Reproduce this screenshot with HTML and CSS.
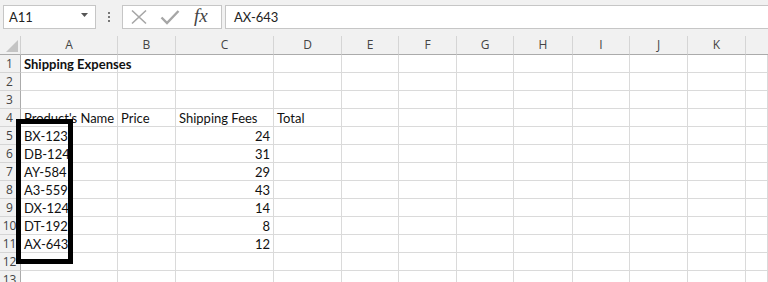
FILE: index.html
```html
<!DOCTYPE html>
<html>
<head>
<meta charset="utf-8">
<link rel="stylesheet" href="styles.css">
</head>
<body>
<div class="app">
  <div class="topbar">
    <div class="namebox">
      <span class="name">A11</span>
      <svg class="caret" width="7" height="4" viewBox="0 0 7 4"><path d="M0 0h7L3.5 4z" fill="#555"/></svg>
    </div>
    <div class="dots"><i></i><i></i><i></i></div>
    <div class="fbuttons">
      <svg class="ico" width="18" height="16" viewBox="0 0 18 16"><path d="M2 1.5L16 14.5M16 1.5L2 14.5" stroke="#a6a6a6" stroke-width="1.6" fill="none"/></svg>
      <svg class="ico" width="20" height="16" viewBox="0 0 20 16"><path d="M1.5 8.5L7 14L18.5 2" stroke="#a6a6a6" stroke-width="2.4" fill="none"/></svg>
      <span class="fx">fx</span>
    </div>
    <div class="formula">AX-643</div>
  </div>
  <div class="sheet">
    <div class="corner"><svg width="12" height="12" viewBox="0 0 12 12"><path d="M12 0V12H0z" fill="#c4c4c4"/></svg></div>
    <div class="ch">A</div><div class="ch">B</div><div class="ch">C</div><div class="ch">D</div><div class="ch">E</div><div class="ch">F</div><div class="ch">G</div><div class="ch">H</div><div class="ch">I</div><div class="ch">J</div><div class="ch">K</div><div class="ch last"></div>

    <div class="rh">1</div><div class="c bold ovf">Shipping Expenses</div><div class="c"></div><div class="c"></div><div class="c"></div><div class="c"></div><div class="c"></div><div class="c"></div><div class="c"></div><div class="c"></div><div class="c"></div><div class="c"></div><div class="c"></div>
    <div class="rh">2</div><div class="c"></div><div class="c"></div><div class="c"></div><div class="c"></div><div class="c"></div><div class="c"></div><div class="c"></div><div class="c"></div><div class="c"></div><div class="c"></div><div class="c"></div><div class="c"></div>
    <div class="rh">3</div><div class="c"></div><div class="c"></div><div class="c"></div><div class="c"></div><div class="c"></div><div class="c"></div><div class="c"></div><div class="c"></div><div class="c"></div><div class="c"></div><div class="c"></div><div class="c"></div>
    <div class="rh">4</div><div class="c">Product's Name</div><div class="c">Price</div><div class="c">Shipping Fees</div><div class="c">Total</div><div class="c"></div><div class="c"></div><div class="c"></div><div class="c"></div><div class="c"></div><div class="c"></div><div class="c"></div><div class="c"></div>
    <div class="rh">5</div><div class="c">BX-123</div><div class="c"></div><div class="c num">24</div><div class="c"></div><div class="c"></div><div class="c"></div><div class="c"></div><div class="c"></div><div class="c"></div><div class="c"></div><div class="c"></div><div class="c"></div>
    <div class="rh">6</div><div class="c">DB-124</div><div class="c"></div><div class="c num">31</div><div class="c"></div><div class="c"></div><div class="c"></div><div class="c"></div><div class="c"></div><div class="c"></div><div class="c"></div><div class="c"></div><div class="c"></div>
    <div class="rh">7</div><div class="c">AY-584</div><div class="c"></div><div class="c num">29</div><div class="c"></div><div class="c"></div><div class="c"></div><div class="c"></div><div class="c"></div><div class="c"></div><div class="c"></div><div class="c"></div><div class="c"></div>
    <div class="rh">8</div><div class="c">A3-559</div><div class="c"></div><div class="c num">43</div><div class="c"></div><div class="c"></div><div class="c"></div><div class="c"></div><div class="c"></div><div class="c"></div><div class="c"></div><div class="c"></div><div class="c"></div>
    <div class="rh">9</div><div class="c">DX-124</div><div class="c"></div><div class="c num">14</div><div class="c"></div><div class="c"></div><div class="c"></div><div class="c"></div><div class="c"></div><div class="c"></div><div class="c"></div><div class="c"></div><div class="c"></div>
    <div class="rh">10</div><div class="c">DT-192</div><div class="c"></div><div class="c num">8</div><div class="c"></div><div class="c"></div><div class="c"></div><div class="c"></div><div class="c"></div><div class="c"></div><div class="c"></div><div class="c"></div><div class="c"></div>
    <div class="rh">11</div><div class="c">AX-643</div><div class="c"></div><div class="c num">12</div><div class="c"></div><div class="c"></div><div class="c"></div><div class="c"></div><div class="c"></div><div class="c"></div><div class="c"></div><div class="c"></div><div class="c"></div>
    <div class="rh">12</div><div class="c"></div><div class="c"></div><div class="c"></div><div class="c"></div><div class="c"></div><div class="c"></div><div class="c"></div><div class="c"></div><div class="c"></div><div class="c"></div><div class="c"></div><div class="c"></div>
    <div class="rh">13</div><div class="c"></div><div class="c"></div><div class="c"></div><div class="c"></div><div class="c"></div><div class="c"></div><div class="c"></div><div class="c"></div><div class="c"></div><div class="c"></div><div class="c"></div><div class="c"></div>
  </div>
  <div class="highlight"></div>
</div>
</body>
</html>
```

FILE: styles.css
```css
html, body {
  margin: 0;
  padding: 0;
  background: #ffffff;
  overflow: hidden;
}
.app {
  position: relative;
  width: 768px;
  height: 282px;
  overflow: hidden;
  font-family: Lato, "Liberation Sans", sans-serif;
}
.topbar {
  height: 36px;
  background: #f1f1f1;
  display: flex;
  align-items: flex-start;
  padding-top: 5px;
  box-sizing: border-box;
}
.namebox {
  margin-left: 3px;
  width: 93px;
  height: 24px;
  box-sizing: border-box;
  background: #fff;
  border: 1px solid #c6c6c6;
  display: flex;
  align-items: center;
  justify-content: space-between;
  padding: 0 7px 0 5px;
  font-size: 13px;
  color: #222;
}
.caret { margin-top: -4px; }
.dots {
  width: 26px;
  height: 24px;
  display: flex;
  flex-direction: column;
  align-items: center;
  justify-content: center;
  gap: 2px;
}
.dots i {
  display: block;
  width: 2px;
  height: 2px;
  background: #777;
}
.fbuttons {
  width: 100px;
  height: 24px;
  box-sizing: border-box;
  background: #fff;
  border: 1px solid #c6c6c6;
  display: flex;
  align-items: center;
  padding-left: 7px;
  gap: 12px;
}
.fx {
  font-family: "Liberation Serif", serif;
  font-style: italic;
  font-size: 19px;
  color: #444;
  margin-left: 2px;
  margin-top: -2px;
}
.formula {
  margin-left: 3px;
  flex: 1;
  height: 24px;
  box-sizing: border-box;
  background: #fff;
  border: 1px solid #c6c6c6;
  border-right: none;
  padding-left: 8px;
  font-size: 13px;
  line-height: 22px;
  color: #222;
}
.sheet {
  display: grid;
  grid-template-columns: 21px 97px 58px 98px 68px 57px 58px 57px 59px 57px 58px 58px 1fr;
  grid-template-rows: 19px repeat(13, 18px);
}
.corner {
  background: #f1f1f1;
  border-right: 1px solid #d0d0d0;
  border-bottom: 1px solid #ababab;
  box-sizing: border-box;
  display: flex;
  align-items: flex-end;
  justify-content: flex-end;
  padding: 0 2px 2px 0;
}
.ch {
  background: #f1f1f1;
  border-right: 1px solid #d5d5d5;
  border-bottom: 1px solid #ababab;
  box-sizing: border-box;
  text-align: center;
  font-family: "Open Sans", sans-serif;
  font-size: 12px;
  line-height: 18px;
  color: #444;
}
.ch.last { border-right: none; }
.rh {
  background: #f1f1f1;
  border-right: 1px solid #ababab;
  border-bottom: 1px solid #d5d5d5;
  box-sizing: border-box;
  text-align: center;
  font-family: "Open Sans", sans-serif;
  font-size: 12px;
  line-height: 18px;
  color: #444;
  padding-right: 1px;
}
.c {
  border-right: 1px solid #dadada;
  border-bottom: 1px solid #dadada;
  box-sizing: border-box;
  font-size: 13px;
  line-height: 19px;
  padding-left: 3px;
  color: #111;
  white-space: nowrap;
}
.c.num {
  text-align: right;
  padding-right: 3px;
  padding-left: 0;
}
.c.bold { font-weight: bold; }
.c.ovf { overflow: visible; position: relative; z-index: 1; }
.highlight {
  position: absolute;
  left: 16px;
  top: 119px;
  width: 57px;
  height: 145px;
  box-sizing: border-box;
  border: 5px solid #000;
}
```
